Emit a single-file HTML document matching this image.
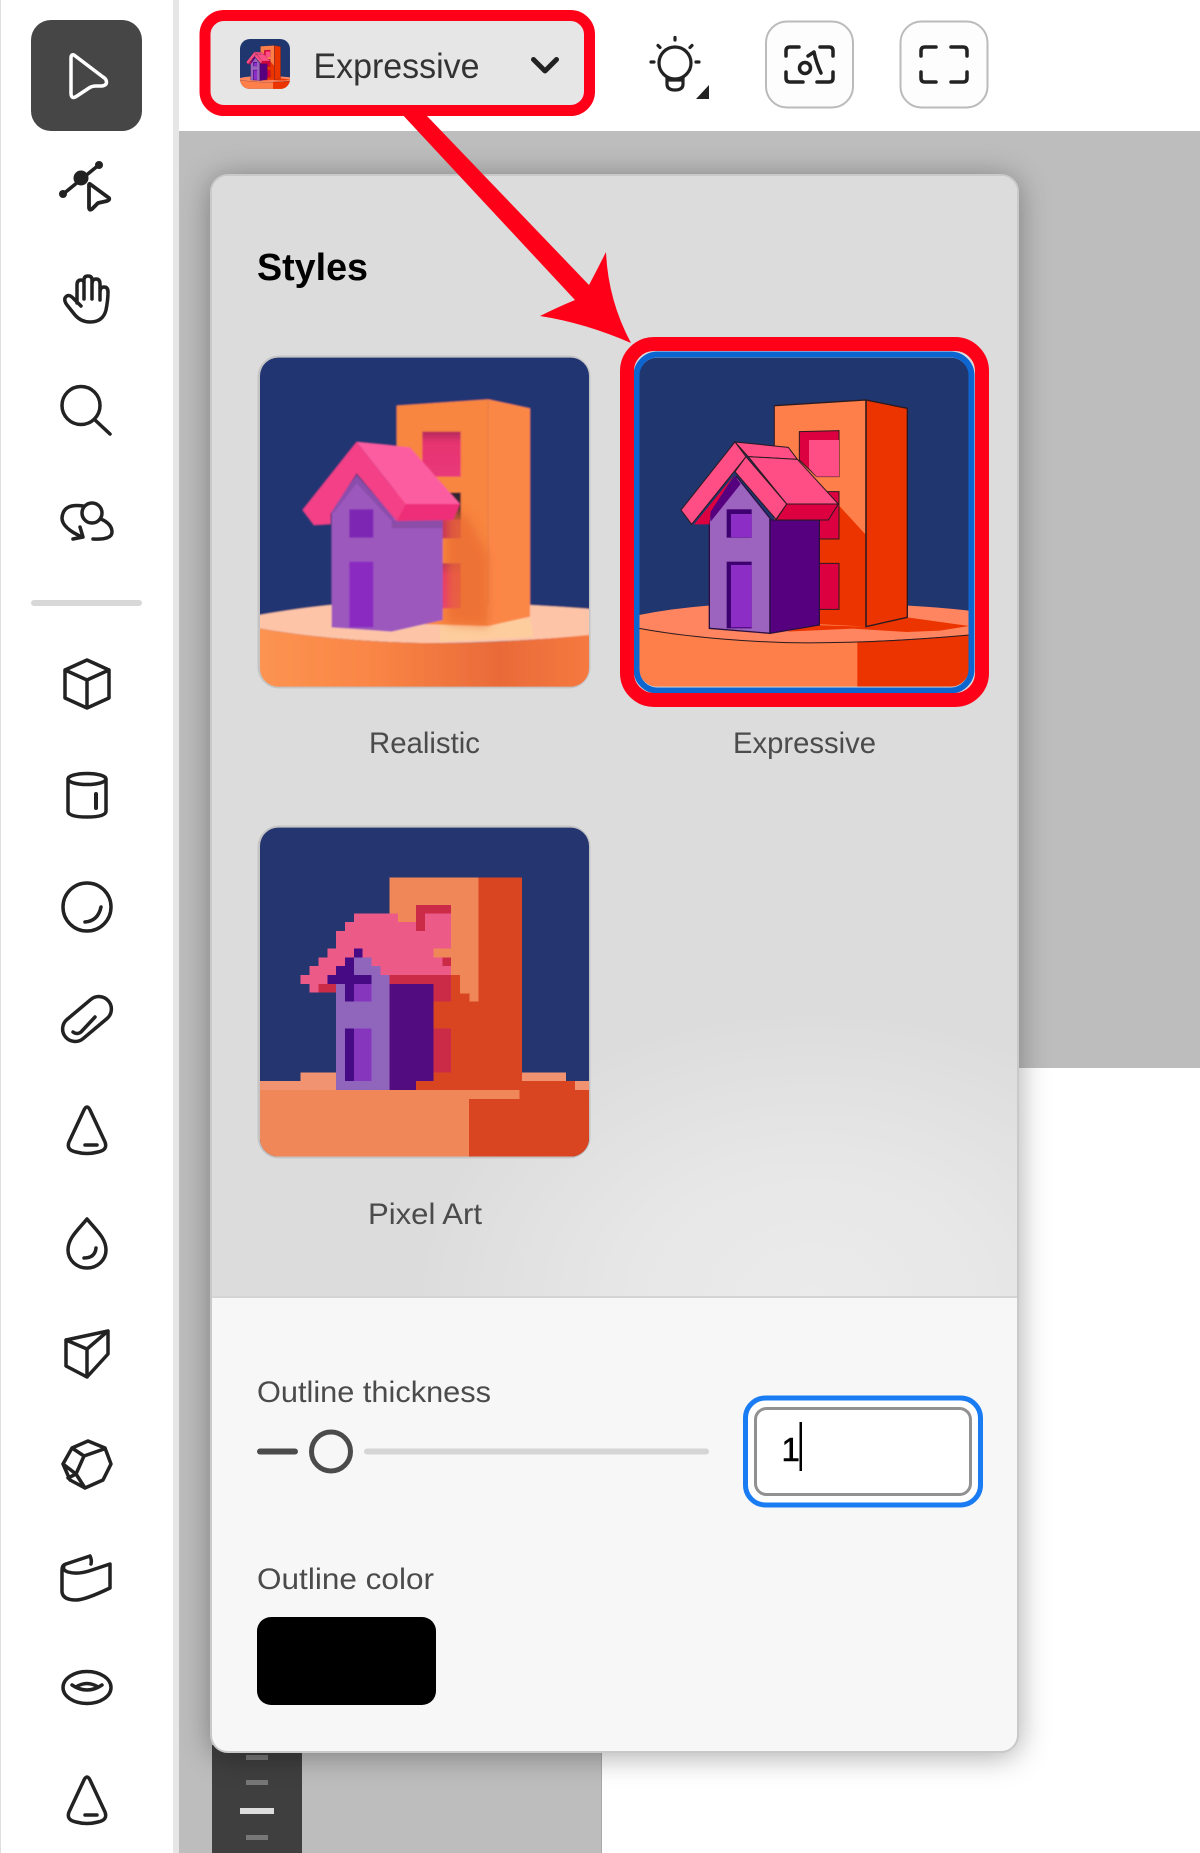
<!DOCTYPE html>
<html lang="en">
<head>
<meta charset="utf-8">
<title>Styles</title>
<style>
html,body{margin:0;padding:0;background:#fff;width:1200px;height:1853px;overflow:hidden}
div{position:absolute;box-sizing:border-box}
svg{position:absolute;left:0;top:0}
text{font-family:"Liberation Sans",sans-serif}
</style>
</head>
<body>
<div style="left:179px;top:131px;width:1021px;height:937px;background:#bdbdbd"></div>
<div style="left:179px;top:1068px;width:422px;height:785px;background:#bdbdbd"></div>
<div style="left:601px;top:1751px;width:1px;height:102px;background:#a8a8a8"></div>
<div style="left:212px;top:1745px;width:90px;height:108px;background:#3f3f3f"></div>
<div style="left:246px;top:1755px;width:22px;height:5px;background:#777"></div>
<div style="left:246px;top:1780px;width:22px;height:5px;background:#777"></div>
<div style="left:240px;top:1808px;width:34px;height:6px;background:#ddd"></div>
<div style="left:246px;top:1835px;width:22px;height:5px;background:#777"></div>
<div style="left:210px;top:174px;width:809px;height:1579px;border-radius:18px;border:2px solid #c9c9c9;box-shadow:0 3px 30px rgba(0,0,0,.34);background:#f7f7f7;overflow:hidden">
  <div style="left:0;top:0;width:805px;height:1122px;border-bottom:2px solid #d4d4d4;background:radial-gradient(ellipse 400px 290px at 600px 1122px,#ebebeb 0%,#e7e7e7 45%,rgba(220,220,220,0) 100%),#dcdcdc"></div>
</div>
<div style="left:0;top:0;width:173px;height:1853px;background:#fff;border-left:1px solid #dedede"></div>
<div style="left:173px;top:0;width:6px;height:1853px;background:#e6e6e6"></div>
<div style="left:179px;top:0;width:1021px;height:131px;background:#fff"></div>
<div style="left:31px;top:20px;width:111px;height:111px;border-radius:20px;background:#464646"></div>

<svg width="1200" height="1853" viewBox="0 0 1200 1853" xmlns="http://www.w3.org/2000/svg">
<defs>
  <clipPath id="c1"><rect x="60" y="53" width="987" height="987" rx="55"/></clipPath>
  <clipPath id="c2"><rect x="57" y="53" width="990" height="987" rx="55"/></clipPath>
  <clipPath id="c3"><rect x="60" y="53" width="987" height="987" rx="55"/></clipPath>
  <filter id="soft" x="-5%" y="-5%" width="110%" height="110%"><feGaussianBlur stdDeviation="2.500"/></filter>
  <filter id="softer" x="-30%" y="-30%" width="160%" height="160%"><feGaussianBlur stdDeviation="14"/></filter>
  <linearGradient id="pf" x1="0" x2="1" y1="0" y2="0">
    <stop offset="0" stop-color="#fd9452"/><stop offset=".35" stop-color="#f98545"/><stop offset=".72" stop-color="#e96a38"/><stop offset="1" stop-color="#f67a40"/>
  </linearGradient>
  <linearGradient id="w1" x1="0" x2="0" y1="0" y2="1">
    <stop offset="0" stop-color="#b52a5c"/><stop offset=".25" stop-color="#e6336f"/><stop offset="1" stop-color="#e8387a"/>
  </linearGradient>
  <g id="exp">
    <rect x="57" y="53" width="990" height="987" fill="#20366f"/>
    <path d="M57 825Q160 805 265 797L865 797Q960 802 1047 812V885Q700 912 500 908Q250 900 57 865Z" fill="#ff8560"/>
    <path d="M57 865Q250 900 500 908Q750 912 1047 885V1040H57Z" fill="#ff7f4a"/>
    <path d="M712 906Q880 902 1047 885V1040H712Z" fill="#ec3400"/>
    <path d="M57 865Q250 900 500 908Q750 912 1047 885" fill="none" stroke="#2a1a20" stroke-width="3"/>
    <path d="M500 875L600 852 862 832 1047 858 960 872 860 876 700 866Z" fill="#ec3400"/>
    <path d="M463 197L738 180V860L463 852Z" fill="#ff7f4a"/>
    <path d="M660 500L738 585V860L590 852V500Z" fill="#ec3400"/>
    <path d="M738 180L862 205V832L738 860Z" fill="#ec3400" stroke="#2a1a20" stroke-width="4"/>
    <path d="M463 197L738 180V860" fill="none" stroke="#2a1a20" stroke-width="4"/>
    <path d="M463 197V320" fill="none" stroke="#2a1a20" stroke-width="3"/>
    <path d="M538 275L657 272V410H590L538 360Z" fill="#dc0040" stroke="#2a1a20" stroke-width="3"/>
    <path d="M567 300H657V410H590L567 385Z" fill="#ff4d85"/>
    <path d="M590 455H657V597H590Z" fill="#dc0040" stroke="#2a1a20" stroke-width="3"/>
    <path d="M590 670H657V808H590Z" fill="#dc0040" stroke="#2a1a20" stroke-width="3"/>
    <path d="M268 515L350 410 450 535V880L268 865Z" fill="#9c63bf" stroke="#2a1040" stroke-width="4"/>
    <path d="M450 540H598V855L450 880Z" fill="#57007f" stroke="#2a1040" stroke-width="4"/>
    <path d="M345 408L362 432 272 545 268 510Z" fill="#57007f"/>
    <rect x="320" y="508" width="75" height="85" fill="#3e0070"/><rect x="333" y="522" width="62" height="70" fill="#8c2dc5"/>
    <rect x="320" y="665" width="75" height="200" fill="#3e0070"/><rect x="333" y="675" width="62" height="187" fill="#8c2dc5"/>
    <path d="M345 306L505 322 532 358 385 350Z" fill="#ff4d85" stroke="#2a1a20" stroke-width="3"/>
    <path d="M385 350L532 358 655 492H500Z" fill="#ff4d85" stroke="#2a1a20" stroke-width="3"/>
    <path d="M500 492H655L625 540H468Z" fill="#dc0040" stroke="#2a1a20" stroke-width="3"/>
    <path d="M345 402L222 553H268L272 515Z" fill="#dc0040"/>
    <path d="M183 510L345 306 378 350 215 553Z" fill="#ff4d85" stroke="#2a1a20" stroke-width="3"/>
    <path d="M378 350L500 492 468 538 345 395Z" fill="#ff4d85" stroke="#2a1a20" stroke-width="3"/>
  </g>
</defs>

<!-- Realistic card -->
<rect x="259" y="357" width="330" height="330" rx="20" fill="none" stroke="#c4c4c4" stroke-width="3"/>
<g transform="translate(240,340) scale(.33333)" clip-path="url(#c1)">
 <g filter="url(#soft)">
  <rect x="40" y="33" width="1027" height="1027" fill="#203673"/>
  <path d="M40 828Q170 805 272 795L870 795Q960 800 1067 808V885Q700 915 500 908Q250 900 40 862Z" fill="#fdc4a8"/>
  <path d="M600 855L870 835 880 890 600 905Z" fill="#fdcd9d"/>
  <path d="M40 862Q250 900 500 908Q750 915 1067 883V1060H40Z" fill="url(#pf)"/>
  <path d="M470 197L745 178V858L470 850Z" fill="#f8853f"/>
  <path d="M745 178L870 205V830L745 858Z" fill="#fb8747"/>
  <rect x="547" y="275" width="115" height="135" fill="url(#w1)"/>
  <rect x="600" y="458" width="62" height="137" fill="#c42d5d"/>
  <rect x="625" y="458" width="37" height="80" fill="#2e2430"/>
  <rect x="600" y="670" width="62" height="135" fill="url(#w1)"/>
  <path d="M620 480L690 540 745 650V858L620 848Z" fill="#e96c33" opacity=".75" filter="url(#softer)"/>
  <path d="M275 510L350 405 460 530 608 540V840L455 875 275 862Z" fill="#9d59bd"/>
  <path d="M275 510L350 405 460 530V548L350 430 280 520Z" fill="#8a4eab"/>
  <path d="M455 540H608V565H455Z" fill="#8c4ea8"/>
  <rect x="328" y="508" width="72" height="85" fill="#7d26b3"/>
  <rect x="328" y="665" width="72" height="197" fill="#8a29c0"/>
  <path d="M350 306L510 322 660 492H497Z" fill="#fc5da0"/>
  <path d="M497 492H660L640 540 470 543Z" fill="#ee2d78"/>
  <path d="M188 510L350 306 497 492 470 543 350 400 272 520V552L222 555Z" fill="#f33f87"/>
 </g>
</g>
<!-- Expressive card -->
<g transform="translate(620,340) scale(.33333)" clip-path="url(#c2)"><use href="#exp"/></g>
<rect x="636.500" y="354.500" width="335" height="336" rx="21" fill="none" stroke="#0d66d0" stroke-width="6"/>
<rect x="627" y="344" width="355" height="356" rx="27" fill="none" stroke="#ff0019" stroke-width="14"/>
<!-- Pixel art card -->
<rect x="259" y="827" width="330" height="330" rx="20" fill="none" stroke="#c4c4c4" stroke-width="3"/>
<g transform="translate(240,810) scale(.33333)" clip-path="url(#c3)" shape-rendering="crispEdges">
  <rect x="60" y="53" width="987" height="987" fill="#243570"/>
  <path d="M60 813H182V787H288V840H60Z" fill="#f19370"/>
  <rect x="846" y="787" width="132" height="26" fill="#f19370"/>
  <path d="M528 813H1005V840H1047V1040H528Z" fill="#d94520"/>
  <rect x="1005" y="813" width="42" height="27" fill="#f19370"/>
  <path d="M60 840H838V867H687V1040H60Z" fill="#f08758"/>
  <rect x="580" y="495" width="266" height="345" fill="#d94520"/>
  <rect x="715" y="203" width="131" height="300" fill="#d94520"/>
  <path d="M448 203H715V575H688V550H660V495H448Z" fill="#f08758"/>
  <path d="M182 495H208V468H235V442H262V416H288V363H315V336H342V310H474V336H528V310H633V416H580V442H607V468H633V495H448V522H235V548H208V522H182Z" fill="#ec5a88"/>
  <rect x="528" y="285" width="105" height="25" fill="#cc2b48"/><rect x="528" y="310" width="27" height="53" fill="#cc2b48"/>
  <rect x="607" y="442" width="26" height="26" fill="#cc2b48"/>
  <path d="M448 495H633V575H580V522H448Z" fill="#cc2b48"/>
  <rect x="580" y="655" width="53" height="132" fill="#cc2b48"/>
  <rect x="235" y="522" width="55" height="26" fill="#cc2b48"/>
  <path d="M288 522V495H342V442H395V468H422V495H448V840H288Z" fill="#9066bd"/>
  <path d="M448 522H580V813H528V840H448Z" fill="#530c80"/>
  <path d="M262 495H288V468H315V442H342V416H368V442H342V495H395V522H342V575H315V522H262Z" fill="#460a84"/>
  <rect x="342" y="522" width="53" height="53" fill="#8636bd"/>
  <rect x="315" y="655" width="27" height="158" fill="#460a84"/>
  <rect x="342" y="655" width="53" height="158" fill="#8636bd"/>
</g>

<!-- Panel text -->
<text x="257" y="280" font-size="38" font-weight="700" fill="#000" textLength="111" lengthAdjust="spacingAndGlyphs">Styles</text>
<text x="369" y="753" font-size="30" fill="#4b4b4b" textLength="111" lengthAdjust="spacingAndGlyphs">Realistic</text>
<text x="733" y="753" font-size="30" fill="#4b4b4b" textLength="143" lengthAdjust="spacingAndGlyphs">Expressive</text>
<text x="368" y="1224" font-size="30" fill="#4b4b4b" textLength="114" lengthAdjust="spacingAndGlyphs">Pixel Art</text>
<text x="257" y="1402" font-size="30" fill="#4b4b4b" textLength="234" lengthAdjust="spacingAndGlyphs">Outline thickness</text>
<text x="257" y="1589" font-size="30" fill="#4b4b4b" textLength="177" lengthAdjust="spacingAndGlyphs">Outline color</text>

<!-- Slider -->
<path d="M260 1451.500H295" stroke="#4b4b4b" stroke-width="6" stroke-linecap="round"/>
<path d="M367 1451.500H706" stroke="#d5d5d5" stroke-width="6" stroke-linecap="round"/>
<circle cx="331" cy="1451.500" r="19.500" fill="#f7f7f7" stroke="#4b4b4b" stroke-width="5"/>
<!-- Input -->
<rect x="745.500" y="1398" width="235" height="107" rx="20" fill="#fff" stroke="#1a7cf2" stroke-width="5"/>
<rect x="755.500" y="1408.500" width="215" height="86" rx="11" fill="#fff" stroke="#919191" stroke-width="3"/>
<text x="781.500" y="1461" font-size="33" fill="#000" stroke="#000" stroke-width=".6">1</text>
<rect x="799.500" y="1422" width="2.500" height="49" fill="#000"/>
<!-- Swatch -->
<rect x="257" y="1617" width="179" height="88" rx="14" fill="#000"/>

<!-- Top bar dropdown -->
<rect x="205" y="15.500" width="384.500" height="95" rx="19" fill="#e6e6e6"/>
<clipPath id="thumb"><rect x="240" y="39" width="50" height="50" rx="10"/></clipPath>
<g clip-path="url(#thumb)"><g transform="translate(237.100,36.300) scale(.0505)"><use href="#exp"/></g></g>
<text x="313.500" y="78" font-size="35" fill="#333" textLength="166" lengthAdjust="spacingAndGlyphs">Expressive</text>
<path d="M533.500 59.500L545 71 556.500 59.500" fill="none" stroke="#222" stroke-width="5" stroke-linecap="round" stroke-linejoin="round"/>

<!-- Red arrow -->
<path d="M400 112H427V116L589 285 Q598 268 606 252 Q608 300 631 343 Q585 323 540 316 Q558 307 575 300Z" fill="#ff0019"/>
<rect x="205" y="15.500" width="384.500" height="95" rx="19" fill="none" stroke="#ff0019" stroke-width="11"/>

<!-- Bulb -->
<g fill="none" stroke="#222" stroke-width="3.200" stroke-linecap="round">
  <circle cx="675" cy="63" r="16"/>
  <path d="M667 78V84Q667 90 675 90Q683 90 683 84V78M667 80H683"/>
  <path d="M675 37.500V40M658 45.500L660 47.500M692 45.500L690 47.500M651 62H654M696 62H699"/>
</g>
<path d="M709 85V99H696Z" fill="#222"/>
<!-- Buttons -->
<rect x="766" y="21.500" width="87" height="86" rx="21" fill="#fdfdfd" stroke="#bbb" stroke-width="2"/>
<rect x="900.500" y="21.500" width="87" height="86" rx="21" fill="#fdfdfd" stroke="#bbb" stroke-width="2"/>
<g fill="none" stroke="#222" stroke-width="3.500" stroke-linecap="round" stroke-linejoin="round">
  <path d="M786 56V51Q786 47 790 47H799M820 47H829Q833 47 833 51V56M786 72V78Q786 82 790 82H803M817 82H829Q833 82 833 78V72"/>
  <circle cx="805" cy="68" r="5.500"/>
  <path d="M808 56L814 52Q816 62 821 73"/>
  <path d="M921 56V51Q921 47 925 47H936M951 47H963Q967 47 967 51V56M921 72V78Q921 82 925 82H936M951 82H963Q967 82 967 78V72"/>
</g>

<!-- Sidebar -->
<path d="M74 55Q71 54 71 58V93Q71 100 77 96L89 88Q92 86 96 86H102Q108 85 106 80Q105 78 103 77Z" fill="none" stroke="#fff" stroke-width="3.500" stroke-linejoin="round"/>
<path d="M34 603H139" stroke="#d8d8d8" stroke-width="6" stroke-linecap="round"/>
<g fill="none" stroke="#222" stroke-width="3.500" stroke-linecap="round" stroke-linejoin="round">
  <!-- node -->
  <path d="M62 195L100 164"/>
  <path d="M90 184L109 198Q110 200 107 201L98 203 92 209Q89 211 89 207V186Q89 183 90 184Z" stroke-width="3.800"/>
  <!-- hand -->
  <path d="M81 306L73 298Q68 293 65 298Q64 301 67 305L75 315Q81 322 90 322Q103 322 106 310Q108 300 108 292Q108 287 104 287Q100 287 100 292V300M100 292V284Q100 279 96 279Q92 279 92 284V299M92 284V280Q92 276 88 276Q84 276 84 280V299M84 283Q84 280 81 280Q77 280 77 285V303"/>
  <!-- search -->
  <circle cx="81" cy="405.500" r="19"/>
  <path d="M95 420L110 434"/>
  <!-- orbit -->
  <circle cx="92" cy="513" r="10"/>
  <path d="M83 506Q63 503 62 518Q62 528 82 537M73 539L83 537 80 527M101 519Q112 524 112 532Q112 540 93 539"/>
  <!-- cube -->
  <path d="M87 660L109 670V698L87 708 65 698V670ZM65 670L87 680 109 670M87 680V708"/>
  <!-- cylinder -->
  <ellipse cx="87" cy="779" rx="19" ry="5.500"/>
  <path d="M68 779V811Q68 817 87 817Q106 817 106 811V779"/>
  <path d="M96 794V808" stroke-width="4"/>
  <!-- sphere -->
  <ellipse cx="87" cy="907" rx="24" ry="24"/>
  <path d="M85 922Q98 921 101 907"/>
  <!-- capsule -->
  <rect x="59" y="1006.500" width="56" height="25" rx="12.500" transform="rotate(-40 87 1019)"/>
  <path d="M73 1032Q77 1035 81 1032L95 1017"/>
  <!-- cone -->
  <path d="M84 1110Q87 1104 90 1110L105 1142Q108 1150 98 1152Q87 1155 76 1152Q66 1150 69 1142Z"/>
  <path d="M85 1145H97"/>
  <!-- drop -->
  <path d="M87 1219C78 1230 68 1238 68 1250A19 18 0 0 0 106 1250C106 1238 96 1230 87 1219Z"/>
  <path d="M84 1258Q95 1258 96 1248"/>
  <!-- wedge -->
  <path d="M66 1340L108 1331V1354L87 1377 66 1366ZM66 1340L87 1349 108 1331M87 1349V1377"/>
  <!-- polyhedron -->
  <path d="M88 1441L105 1448 111 1464 103 1480 85 1488 70 1480 63 1464 72 1448ZM72 1448L84 1456 104 1449M84 1456L76 1474 85 1488M63 1464L76 1474 68 1478"/>
  <!-- strip -->
  <path d="M90 1556L66 1564Q62 1565 62 1570V1592Q63 1600 76 1600Q85 1600 110 1588V1564L92 1570Q78 1575 68 1572Q62 1570 64 1566M90 1556Q92 1560 91 1564"/>
  <!-- torus -->
  <ellipse cx="87" cy="1687.500" rx="24" ry="16"/>
  <path d="M72 1685Q87 1695 102 1685M76 1687Q87 1680 98 1687"/>
  <!-- cone 2 -->
  <path d="M84 1780Q87 1774 90 1780L105 1812Q108 1820 98 1822Q87 1825 76 1822Q66 1820 69 1812Z"/>
  <path d="M85 1815H97"/>
</g>
<circle cx="81" cy="178" r="7.500" fill="#222"/><circle cx="99" cy="165" r="4" fill="#222"/><circle cx="63" cy="194" r="4" fill="#222"/>
</svg>
</body>
</html>
